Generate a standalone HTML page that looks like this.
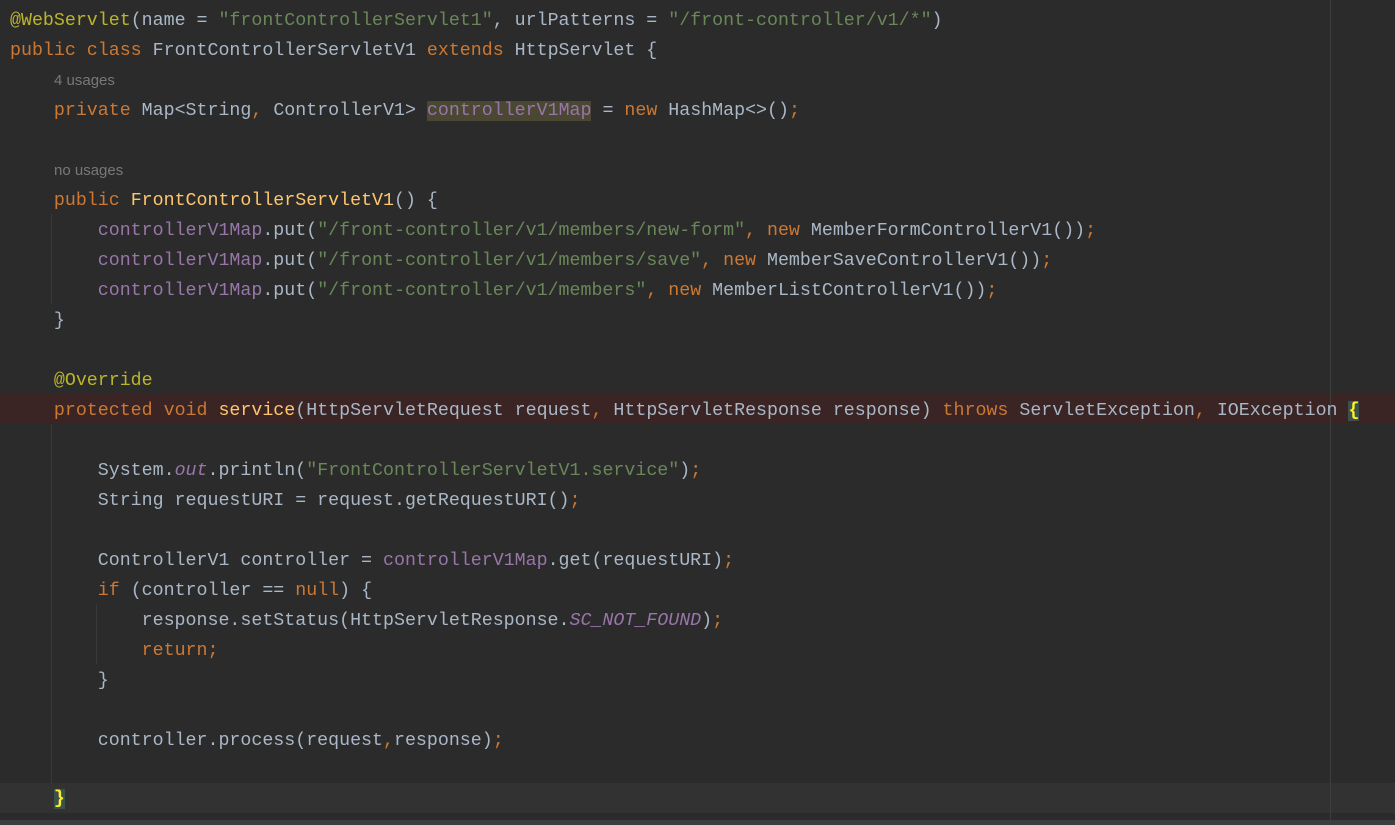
<!DOCTYPE html><html><head><style>
body{margin:0;width:1395px;height:825px;background:#2b2b2b;overflow:hidden;position:relative;font-family:"Liberation Mono",monospace;font-size:18.3px;color:#a9b7c6}
.l{position:absolute;left:10px;height:30px;line-height:30px;white-space:pre;margin-top:2px}
.k{color:#cc7832}.s{color:#6a8759}.a{color:#bbb529}.f{color:#9876aa}.m{color:#ffc66d}.i{font-style:italic}
.h{position:absolute;left:54px;font-family:"Liberation Sans",sans-serif;font-size:15px;color:#787878;height:30px;line-height:30px;margin-top:2px}
.b{background:#3b514d;color:#ffef28;font-weight:bold}
</style></head><body>
<div style="position:absolute;left:0;top:394px;width:1395px;height:30px;background:#3a2424"></div>
<div style="position:absolute;left:0;top:783px;width:1395px;height:30px;background:#323232"></div>
<div style="position:absolute;left:1330px;top:0;width:1px;height:820px;background:#3e3e3e"></div>
<div style="position:absolute;left:51px;top:214px;width:1px;height:90px;background:#393939"></div>
<div style="position:absolute;left:51px;top:424px;width:1px;height:360px;background:#393939"></div>
<div style="position:absolute;left:96px;top:604px;width:1px;height:60px;background:#393939"></div>
<div style="position:absolute;left:0;top:820px;width:1395px;height:5px;background:#3c3f41"></div>
<div class="l" style="top:4px"><span class="a">@WebServlet</span>(name = <span class="s">"frontControllerServlet1"</span>, urlPatterns = <span class="s">"/front-controller/v1/*"</span>)</div>
<div class="l" style="top:34px"><span class="k">public class </span>FrontControllerServletV1 <span class="k">extends </span>HttpServlet {</div>
<div class="h" style="top:64px">4 usages</div>
<div class="l" style="top:94px">    <span class="k">private </span>Map&lt;String<span class="k">, </span>ControllerV1&gt; <span class="f" style="background:#4a4733">controllerV1Map</span> = <span class="k">new </span>HashMap&lt;&gt;()<span class="k">;</span></div>
<div class="h" style="top:154px">no usages</div>
<div class="l" style="top:184px">    <span class="k">public </span><span class="m">FrontControllerServletV1</span>() {</div>
<div class="l" style="top:214px">        <span class="f">controllerV1Map</span>.put(<span class="s">"/front-controller/v1/members/new-form"</span><span class="k">, new </span>MemberFormControllerV1())<span class="k">;</span></div>
<div class="l" style="top:244px">        <span class="f">controllerV1Map</span>.put(<span class="s">"/front-controller/v1/members/save"</span><span class="k">, new </span>MemberSaveControllerV1())<span class="k">;</span></div>
<div class="l" style="top:274px">        <span class="f">controllerV1Map</span>.put(<span class="s">"/front-controller/v1/members"</span><span class="k">, new </span>MemberListControllerV1())<span class="k">;</span></div>
<div class="l" style="top:304px">    }</div>
<div class="l" style="top:364px">    <span class="a">@Override</span></div>
<div class="l" style="top:394px">    <span class="k">protected void </span><span class="m">service</span>(HttpServletRequest request<span class="k">, </span>HttpServletResponse response) <span class="k">throws </span>ServletException<span class="k">, </span>IOException <span class="b">{</span></div>
<div class="l" style="top:454px">        System.<span class="f i">out</span>.println(<span class="s">"FrontControllerServletV1.service"</span>)<span class="k">;</span></div>
<div class="l" style="top:484px">        String requestURI = request.getRequestURI()<span class="k">;</span></div>
<div class="l" style="top:544px">        ControllerV1 controller = <span class="f">controllerV1Map</span>.get(requestURI)<span class="k">;</span></div>
<div class="l" style="top:574px">        <span class="k">if </span>(controller == <span class="k">null</span>) {</div>
<div class="l" style="top:604px">            response.setStatus(HttpServletResponse.<span class="f i">SC_NOT_FOUND</span>)<span class="k">;</span></div>
<div class="l" style="top:634px">            <span class="k">return;</span></div>
<div class="l" style="top:664px">        }</div>
<div class="l" style="top:724px">        controller.process(request<span class="k">,</span>response)<span class="k">;</span></div>
<div class="l" style="top:782px">    <span class="b">}</span></div>
</body></html>
